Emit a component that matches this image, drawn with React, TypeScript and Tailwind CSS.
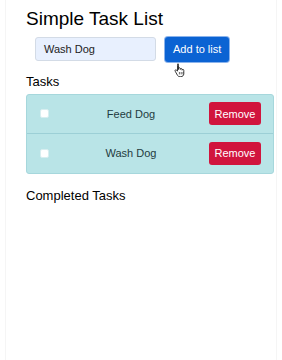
import { useState } from "react";

type Task = { id: number; name: string; done: boolean };

function HandCursor() {
  return (
    <svg width="12" height="14" viewBox="0 0 12 14" className="absolute left-[9px] top-[27px]">
      <path
        d="M3.5 1.2c.6 0 1 .4 1 1V6.5V5.6c0-.5.4-.9.9-.9s.9.4.9.9v.8c0-.5.4-.9.9-.9s.9.4.9.9v.8c0-.5.4-.8.9-.8s.8.4.8.9v3.4c0 1.8-1.3 3-3 3H5.9c-1 0-1.8-.5-2.4-1.3L1.2 8.2c-.3-.4-.2-1 .2-1.3.4-.3.9-.2 1.2.2l.9 1.1V2.2c0-.6.4-1 1-1z"
        fill="#fff"
        stroke="#222"
        strokeWidth="0.9"
        strokeLinejoin="round"
      />
      <path d="M5.4 9v2.4M7.2 9v2.4M9 9v2.4" stroke="#222" strokeWidth="0.7" />
    </svg>
  );
}

function TaskRow({ task, last }: { task: Task; last: boolean }) {
  return (
    <div
      className={
        "flex items-center h-[39px] pl-[13px] pr-[12px] " +
        (last ? "" : "border-b border-[#9ccfd6]")
      }
    >
      <div className="w-[9px] h-[9px] bg-white rounded-[2px] border border-[#d8eef0] shrink-0" />
      <div className="flex-1 text-center text-[11px] text-[#1f3b40] pl-[4px]">{task.name}</div>
      <button className="w-[52px] h-[23px] bg-[#d1143d] text-white text-[11px] rounded-[3px]">
        Remove
      </button>
    </div>
  );
}

export default function App() {
  const [tasks] = useState<Task[]>([
    { id: 1, name: "Feed Dog", done: false },
    { id: 2, name: "Wash Dog", done: false },
  ]);

  return (
    <div className="w-[282px] h-[360px] bg-white font-['Liberation_Sans',Arial,sans-serif] text-[#111] px-[5px]">
      <div className="h-full border-x border-[#f5f5f5] pl-[20px] pr-[2px]">
        <h1 className="text-[19px] leading-[24px] pt-[7px] text-black">Simple Task List</h1>

        <div className="flex items-center gap-[9px] pl-[9px] mt-[5px] relative">
          <div className="w-[121px] h-[24px] bg-[#e8f0fe] border border-[#d3dbe6] rounded-[3px] flex items-center pl-[8px] text-[11px] text-[#222]">
            Wash Dog
          </div>
          <div className="relative">
            <button className="h-[25px] px-[8px] bg-[#0b63d3] text-white text-[11px] rounded-[3px] shadow-[0_0_0_1px_#8ab3ec]">
              Add to list
            </button>
            <HandCursor />
          </div>
        </div>

        <h2 className="text-[13px] leading-[16px] mt-[12px] text-black">Tasks</h2>

        <div className="mt-[4px] w-[248px] bg-[#b9e4e7] border border-[#a6d7dc] rounded-[3px]">
          {tasks.map((t, i) => (
            <TaskRow key={t.id} task={t} last={i === tasks.length - 1} />
          ))}
        </div>

        <h2 className="text-[13px] leading-[16px] mt-[14px] text-black">Completed Tasks</h2>
      </div>
    </div>
  );
}
